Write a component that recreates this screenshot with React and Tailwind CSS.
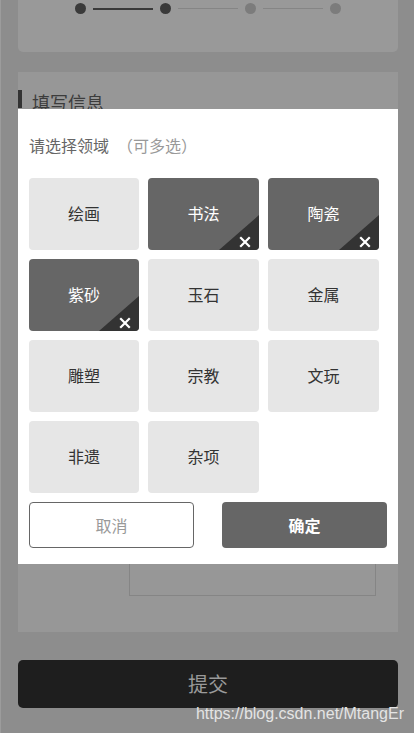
import { useState } from "react";

const FIELDS = ["绘画", "书法", "陶瓷", "紫砂", "玉石", "金属", "雕塑", "宗教", "文玩", "非遗", "杂项"];

function Tile({ label, active, onClick }) {
  return (
    <button
      onClick={onClick}
      className={
        "relative h-[72px] rounded-[4px] overflow-hidden flex items-center justify-center text-[16px] " +
        (active ? "bg-[#666666] text-white" : "bg-[#e6e6e6] text-[#333333]")
      }
    >
      <span className="-mt-[2px]">{label}</span>
      {active ? (
        <svg className="absolute right-0 bottom-0" width="40" height="35" viewBox="0 0 40 35">
          <polygon points="40,0 40,35 0,35" fill="#333333" />
          <path d="M22 23 L30 31 M30 23 L22 31" stroke="#ffffff" strokeWidth="2.2" strokeLinecap="square" />
        </svg>
      ) : null}
    </button>
  );
}

export default function App() {
  const [picked, setPicked] = useState(["书法", "陶瓷", "紫砂"]);

  const toggle = (f) =>
    setPicked(picked.includes(f) ? picked.filter((x) => x !== f) : [...picked, f]);

  return (
    <div
      className="relative w-[414px] h-[733px] overflow-hidden bg-[#8d8d8d] border-l border-[#9c9c9c]"
      style={{ fontFamily: '"Noto Sans CJK SC", "Liberation Sans", sans-serif' }}
    >
      {/* steps */}
      <div className="ml-[17px] w-[380px] h-[52px] bg-[#999999] rounded-b-[5px] pt-[3px]">
        <div className="flex items-center pl-[57px]">
          <span className="w-[11px] h-[11px] rounded-full bg-[#3a3a3a]" />
          <span className="w-[60px] h-[2px] bg-[#3a3a3a] mx-[7px]" />
          <span className="w-[11px] h-[11px] rounded-full bg-[#3a3a3a]" />
          <span className="w-[60px] h-px bg-[#858585] mx-[7px]" />
          <span className="w-[11px] h-[11px] rounded-full bg-[#7c7c7c]" />
          <span className="w-[60px] h-px bg-[#858585] mx-[7px]" />
          <span className="w-[11px] h-[11px] rounded-full bg-[#7c7c7c]" />
        </div>
      </div>

      {/* form card */}
      <div className="ml-[17px] mt-[20px] w-[380px] h-[560px] bg-[#979797] pt-[18px]">
        <div className="flex items-center h-[18px]">
          <span className="w-[4px] h-[18px] bg-[#333333]" />
          <span className="ml-[10px] text-[18px] leading-[18px] text-[#3c3c3c] mt-[6px]">填写信息</span>
        </div>
        <div className="ml-[111px] mt-[380px] w-[247px] h-[108px] border border-[#858585]" />
      </div>

      {/* submit */}
      <button className="block ml-[17px] mt-[28px] w-[380px] h-[48px] rounded-[5px] bg-[#1e1e1e] text-[#9a9a9a] text-[20px]">
        提交
      </button>

      <div
        className="absolute right-[10px] top-[704px] text-[16px] leading-[20px] text-[#e4e4e4]"
        style={{ fontFamily: '"Liberation Sans", Arial, sans-serif' }}
      >
        https://blog.csdn.net/MtangEr
      </div>

      {/* modal */}
      <div className="absolute left-[17px] top-[109px] w-[380px] h-[455px] bg-white pl-[11px] pt-[25px]">
        <div className="text-[16px] leading-[22px] text-[#666666]">
          请选择领域<span className="ml-[8px] text-[#999999]">（可多选）</span>
        </div>
        <div className="mt-[22px] grid grid-cols-[110px_111px_111px] gap-x-[9px] gap-y-[9px]">
          {FIELDS.map((f) => (
            <Tile key={f} label={f} active={picked.includes(f)} onClick={() => toggle(f)} />
          ))}
        </div>
        <div className="mt-[9px] flex gap-[28px]">
          <button className="w-[165px] h-[46px] rounded-[4px] border border-[#666666] text-[#999999] text-[16px]">
            取消
          </button>
          <button className="w-[165px] h-[46px] rounded-[4px] bg-[#666666] text-white text-[16px] font-bold">
            确定
          </button>
        </div>
      </div>
    </div>
  );
}
